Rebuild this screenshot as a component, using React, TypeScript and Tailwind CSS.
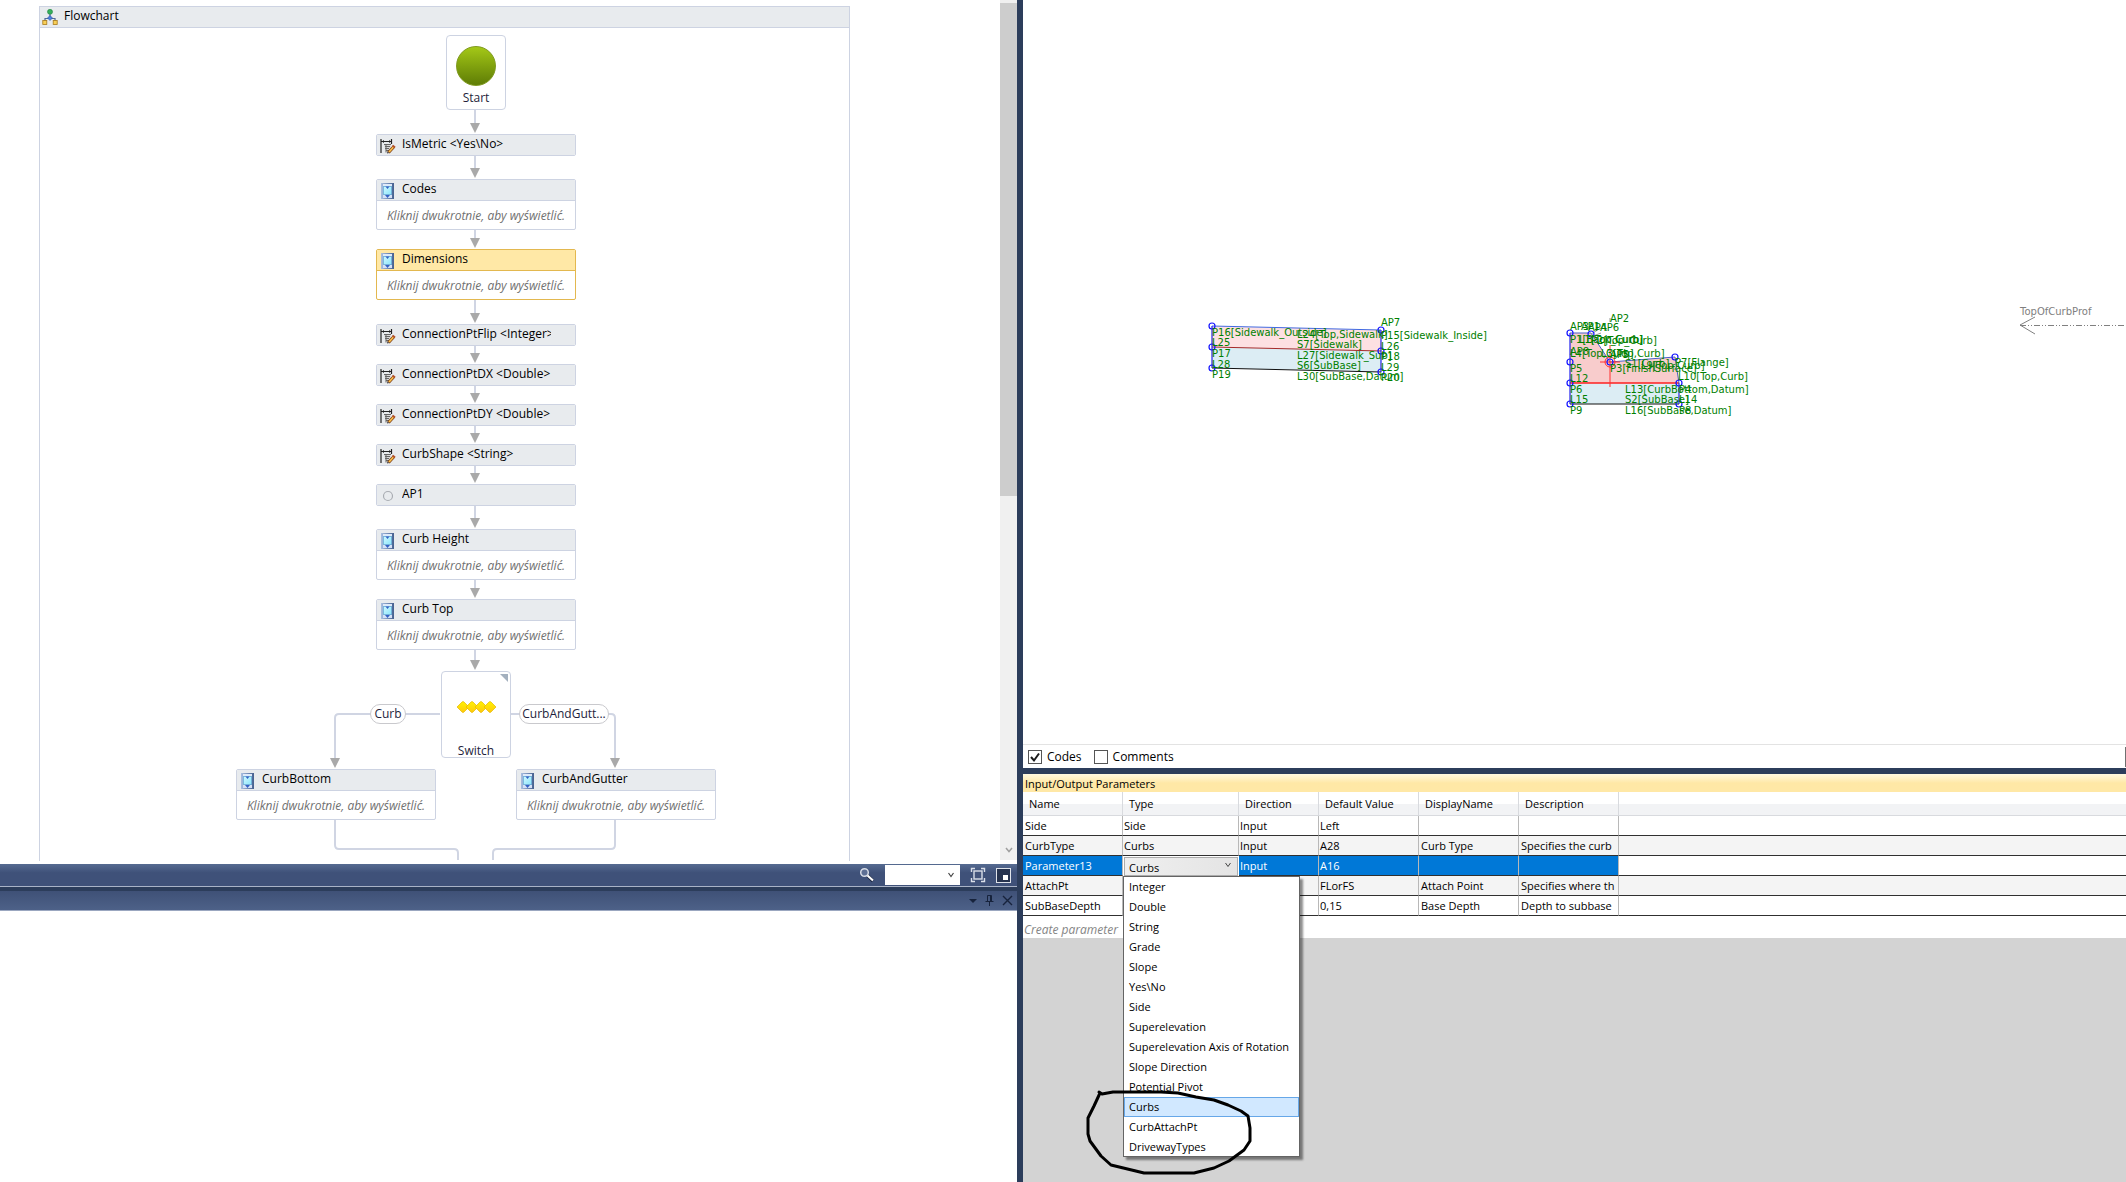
import React from "react";

type StepKind = "variable" | "sequence" | "point";

interface Step {
  label: string;
  kind: StepKind;
  x: number;
  y: number;
  selected?: boolean;
}

const steps: Step[] = [
  { label: "IsMetric <Yes\\No>", kind: "variable", x: 376, y: 134 },
  { label: "Codes", kind: "sequence", x: 376, y: 179 },
  { label: "Dimensions", kind: "sequence", x: 376, y: 249, selected: true },
  { label: "ConnectionPtFlip <Integer>", kind: "variable", x: 376, y: 324 },
  { label: "ConnectionPtDX <Double>", kind: "variable", x: 376, y: 364 },
  { label: "ConnectionPtDY <Double>", kind: "variable", x: 376, y: 404 },
  { label: "CurbShape <String>", kind: "variable", x: 376, y: 444 },
  { label: "AP1", kind: "point", x: 376, y: 484 },
  { label: "Curb Height", kind: "sequence", x: 376, y: 529 },
  { label: "Curb Top", kind: "sequence", x: 376, y: 599 },
  { label: "CurbBottom", kind: "sequence", x: 236, y: 769 },
  { label: "CurbAndGutter", kind: "sequence", x: 516, y: 769 },
];

const verticalLinks: [number, number][] = [
  [109, 134],
  [156, 179],
  [230, 249],
  [300, 324],
  [346, 364],
  [386, 404],
  [426, 444],
  [466, 484],
  [506, 529],
  [580, 599],
  [650, 671],
];

const typeOptions = [
  "Integer",
  "Double",
  "String",
  "Grade",
  "Slope",
  "Yes\\No",
  "Side",
  "Superelevation",
  "Superelevation Axis of Rotation",
  "Slope Direction",
  "Potential Pivot",
  "Curbs",
  "CurbAttachPt",
  "DrivewayTypes",
];

const parameters = [
  { name: "Side", type: "Side", direction: "Input", value: "Left", display: "", description: "" },
  { name: "CurbType", type: "Curbs", direction: "Input", value: "A28", display: "Curb Type", description: "Specifies the curb" },
  { name: "Parameter13", type: "Curbs", direction: "Input", value: "A16", display: "", description: "", selected: true },
  { name: "AttachPt", type: "", direction: "", value: "FLorFS", display: "Attach Point", description: "Specifies where th" },
  { name: "SubBaseDepth", type: "", direction: "", value: "0,15", display: "Base Depth", description: "Depth to subbase" },
];

function VariableIcon() {
  return (
    <svg className="h-4 w-4" viewBox="0 0 16 16" fill="none">
      <path d="M1 1v14M11.500 1v5M1 3.500h11" stroke="#222" strokeWidth="1.200" />
      <path d="M2 3.500l2-1.500v3zM11 3.500l-2-1.500v3z" fill="#222" />
      <path d="M4 6.500h7l-1 7H6z" fill="#d9d9d9" />
      <path d="M4 6.500h7M5 8.500h5M5 10.500h4M6 12.500h3M6 6.500v8" stroke="#666" />
      <path d="M8.500 14.500L14 8.500" stroke="#7a3b12" strokeWidth="3.200" />
      <path d="M9 14L13.500 9" stroke="#fbc04a" strokeWidth="1.800" />
      <path d="M12.500 7.500l2.500 2" stroke="#b4532a" strokeWidth="2" />
      <path d="M7 15.500l.5-2 1.500 1.500z" fill="#333" />
    </svg>
  );
}

function SequenceIcon() {
  return (
    <svg className="h-4 w-4" viewBox="0 0 16 16">
      <defs>
        <linearGradient id="seq-frame" x1="0" x2="1">
          <stop offset="0" stopColor="#a9c0e2" />
          <stop offset="1" stopColor="#46608f" />
        </linearGradient>
        <linearGradient id="seq-fill" x1="0" x2="1" y2="1">
          <stop offset="0" stopColor="#d2f8ff" />
          <stop offset="1" stopColor="#8ce6fa" />
        </linearGradient>
      </defs>
      <rect x="1" y="0" width="13" height="16" fill="url(#seq-frame)" />
      <rect x="3" y="1" width="9" height="2" fill="#dfeafa" />
      <rect x="3" y="12" width="9" height="3" fill="#d3e0f6" />
      <rect x="3.500" y="3.500" width="8" height="8" fill="url(#seq-fill)" stroke="#6fb4dc" strokeWidth=".8" />
      <path d="M5.500 3.500h4l-2 2.500zM5 12h5l-2.500 3z" fill="#3461c4" />
    </svg>
  );
}

function PointIcon() {
  return (
    <svg className="h-4 w-4" viewBox="0 0 16 16">
      <circle cx="8" cy="8" r="4.500" fill="none" stroke="#a9adb3" strokeWidth="1.200" />
    </svg>
  );
}

function FlowchartIcon() {
  return (
    <svg className="h-4 w-4" viewBox="0 0 16 16" fill="none">
      <path d="M8 5v4M3 12V9.500h10V12" stroke="#536b96" strokeWidth="1.200" />
      <circle cx="8" cy="2.800" r="2.500" fill="#35b15c" stroke="#21803e" strokeWidth=".6" />
      <path d="M8 6.500l2.500 2.500L8 11.500 5.500 9z" fill="#4a7fe0" stroke="#2b529f" strokeWidth=".6" />
      <rect x=".8" y="11.500" width="4" height="4" fill="#f8cf57" stroke="#a87a1c" strokeWidth=".8" />
      <rect x="11.200" y="11.500" width="4" height="4" fill="#f8cf57" stroke="#a87a1c" strokeWidth=".8" />
    </svg>
  );
}

function StepNode({ step }: { step: Step }) {
  const border = step.selected ? "border-[#e3b84f]" : "border-[#cdd3e2]";
  const head = step.selected ? "bg-[#ffe8a6]" : "bg-[#e8ebee]";
  return (
    <section
      className={`absolute w-50 overflow-hidden rounded-xs border bg-white ${border}`}
      style={{ left: step.x, top: step.y }}
    >
      <header className={`flex h-5 items-start gap-[6px] pl-[3px] ${head}`}>
        <span className="mt-[3px] shrink-0">
          {step.kind === "variable" && <VariableIcon />}
          {step.kind === "sequence" && <SequenceIcon />}
          {step.kind === "point" && <PointIcon />}
        </span>
        <h3 className="mt-px w-[149px] overflow-hidden whitespace-nowrap leading-4">{step.label}</h3>
      </header>
      {step.kind === "sequence" && (
        <p className={`flex h-[29px] items-center justify-center whitespace-nowrap border-t pt-[2px] italic text-[#707070] ${border}`}>
          Kliknij dwukrotnie, aby wyświetlić.
        </p>
      )}
    </section>
  );
}

function Connectors() {
  return (
    <svg className="absolute left-0 top-0 h-[860px] w-[850px]" fill="none">
      <g stroke="#d0d5e3" strokeWidth="2">
        {verticalLinks.map(([from, to]) => (
          <path key={from} d={`M475 ${from}V${to - 4}`} />
        ))}
        <path d="M440 714H339q-4 0-4 4v46M511 714h100q4 0 4 4v46" />
        <path d="M335 820v25q0 4 4 4h115q4 0 4 4v8M615 820v25q0 4-4 4H497q-4 0-4 4v8" />
      </g>
      <g fill="#a9a9a9">
        {verticalLinks.map(([from, to]) => (
          <path key={from} d={`M470 ${to - 11}h10l-5 10z`} />
        ))}
        <path d="M330 758h10l-5 10zM610 758h10l-5 10z" />
      </g>
    </svg>
  );
}

function Flowchart() {
  return (
    <div className="relative flex h-[864px] overflow-hidden bg-white pb-1">
      <div className="relative h-full w-[1000px] max-w-[calc(100%-17px)] shrink-0">
        <div className="ml-[39px] mr-[150px] mt-[6px] h-[855px] border border-b-0 border-[#cdd3e2]">
          <header className="flex h-[21px] items-center gap-[6px] border-b border-[#cdd3e2] bg-[#e8ebee] pl-[2px]">
            <FlowchartIcon />
            <h2 className="pb-[2px] leading-4">Flowchart</h2>
          </header>
        </div>
        <Connectors />
        <div className="absolute left-[446px] top-[35px] flex h-[75px] w-15 flex-col items-center justify-between rounded border border-[#cdd3e2] bg-white pb-[3px] pt-[10px]">
          <div className="h-10 w-10 rounded-full border border-[#7f9a1f] bg-linear-to-b from-[#a4c817] to-[#5f7d06]" />
          <span className="leading-4 text-[#1e1e3c]">Start</span>
        </div>
        {steps.map((step) => (
          <StepNode key={step.label} step={step} />
        ))}
        <div className="absolute left-[441px] top-[671px] flex h-[87px] w-[70px] flex-col items-center justify-between rounded border border-[#cdd3e2] bg-white pt-7">
          <svg className="h-4 w-10" viewBox="0 0 40 16">
            <defs>
              <linearGradient id="diamond" x2="0" y2="1">
                <stop offset="0" stopColor="#fff200" />
                <stop offset="1" stopColor="#ffc90e" />
              </linearGradient>
            </defs>
            {[7, 16, 25, 34].map((x) => (
              <path key={x} d={`M${x - 6} 7l5-5q1-1 2 0l5 5-5 5q-1 1-2 0z`} fill="url(#diamond)" stroke="#e6b800" strokeWidth=".7" />
            ))}
          </svg>
          <span className="leading-[12px] text-[#1e1e3c]">Switch</span>
          <svg className="absolute right-[2px] top-[2px] h-2 w-2" viewBox="0 0 8 8">
            <path d="M0 0h8v8z" fill="#a3b0be" />
          </svg>
        </div>
        <span className="absolute left-[370px] top-[704px] flex h-5 w-9 items-center justify-center rounded-full border border-[#c9c9cd] bg-white text-[#1e1e3c]">
          Curb
        </span>
        <span className="absolute left-[519px] top-[704px] flex h-5 w-[90px] items-center justify-center rounded-full border border-[#c9c9cd] bg-white text-[#1e1e3c]">
          CurbAndGutt...
        </span>
      </div>
      <div className="ml-auto flex w-[17px] shrink-0 flex-col bg-[#f0f0f0]">
        <div className="mt-[3px] h-[493px] bg-[#cdcdcd]" />
        <button aria-label="Scroll down" className="mt-auto flex h-5 items-center justify-center">
          <svg className="h-2 w-2" viewBox="0 0 8 8" fill="none" stroke="#a0a0a0" strokeWidth="1.500">
            <path d="M1 2l3 3.500L7 2" />
          </svg>
        </button>
      </div>
    </div>
  );
}

function ZoomBar() {
  return (
    <div className="flex h-[23px] items-center justify-end border-b border-[#a9b3c7] bg-linear-to-b from-[#566b91] to-[#3f5179] to-40% pr-[6px]">
      <button aria-label="Search" className="mr-[10px]">
        <svg className="h-4 w-4" viewBox="0 0 16 16" fill="none">
          <path d="M8.500 8.500L14 14" stroke="#1c2740" strokeWidth="3.500" />
          <path d="M8 8l6 5.500" stroke="#fff" strokeWidth="2.200" />
          <circle cx="5.500" cy="5.500" r="3.800" stroke="#d6dbe5" strokeWidth="1.500" fill="#5d6f94" />
        </svg>
      </button>
      <div className="relative mr-[10px] h-5 w-[75px]">
        <select aria-label="Zoom" className="h-5 w-full appearance-none bg-white text-black outline-none">
          <option></option>
        </select>
        <svg className="pointer-events-none absolute right-[6px] top-[7px] h-[6px] w-[6px]" viewBox="0 0 6 6" fill="none" stroke="#444" strokeWidth="1.200">
          <path d="M.5 1L3 4.500 5.500 1" />
        </svg>
      </div>
      <button aria-label="Fit to screen" className="mr-[10px]">
        <svg className="h-4 w-4" viewBox="0 0 16 16" fill="none" stroke="#d9dee8" strokeWidth="1.400">
          <path d="M1.500 5V1.500H5M11 1.500h3.500V5M14.500 11v3.500H11M5 14.500H1.500V11" />
          <rect x="4" y="4" width="8" height="8" fill="#44557c" />
        </svg>
      </button>
      <button aria-label="Overview" className="border border-[#dfe3ea] bg-[#26334f]">
        <svg className="h-[13px] w-[13px]" viewBox="0 0 13 13">
          <rect x="6" y="6" width="5" height="5" fill="#fff" />
        </svg>
      </button>
    </div>
  );
}

function LowerPane() {
  return (
    <section className="flex grow flex-col">
      <header className="flex h-5 items-center justify-end gap-[7px] border-b border-[#9ba7c0] bg-linear-to-b from-[#3f5177] to-[#4d6188] pr-1">
        <button aria-label="Window position">
          <svg className="h-2 w-2" viewBox="0 0 8 8">
            <path d="M0 2h8L4 6z" fill="#17233c" />
          </svg>
        </button>
        <button aria-label="Auto hide">
          <svg className="h-[11px] w-[11px]" viewBox="0 0 11 11" fill="none" stroke="#17233c">
            <path d="M3.500 6.500v-6h4v6M6.500.5v6M1.500 6.500h8M5.500 6.500V11" />
          </svg>
        </button>
        <button aria-label="Close">
          <svg className="h-[11px] w-[11px]" viewBox="0 0 11 11" fill="none" stroke="#17233c" strokeWidth="1.400">
            <path d="M1 1l9 9M10 1l-9 9" />
          </svg>
        </button>
      </header>
      <div className="grow bg-white" />
    </section>
  );
}

const previewLabels: [number, number, string][] = [
  [1380, 326, "AP7"],
  [1211, 336, "P16[Sidewalk_Outside]"],
  [1296, 338, "L24[Top,Sidewalk]"],
  [1380, 339, "P15[Sidewalk_Inside]"],
  [1211, 346, "L25"],
  [1296, 348, "S7[Sidewalk]"],
  [1380, 350, "L26"],
  [1211, 357, "P17"],
  [1296, 359, "L27[Sidewalk_Sub]"],
  [1380, 360, "P18"],
  [1211, 368, "L28"],
  [1296, 369, "S6[SubBase]"],
  [1380, 371, "L29"],
  [1211, 378, "P19"],
  [1296, 380, "L30[SubBase,Datum]"],
  [1380, 381, "P20"],
  [1609, 322, "AP2"],
  [1569, 330, "AP3"],
  [1580, 330, "AP1"],
  [1587, 331, "AP4"],
  [1599, 331, "AP6"],
  [1569, 343, "P1[Back_Curb]"],
  [1578, 343, "L1[Top,Curb]"],
  [1590, 344, "P2[Top_Curb]"],
  [1569, 355, "AP8"],
  [1569, 357, "L4[Top,Curb]"],
  [1600, 357, "L3[Top,Curb]"],
  [1609, 358, "AP5"],
  [1569, 372, "P5"],
  [1609, 372, "P3[FinishSurface]"],
  [1624, 367, "S1[Curb]"],
  [1640, 369, "L9[Top,Curb]"],
  [1674, 366, "P7[Flange]"],
  [1677, 380, "L10[Top,Curb]"],
  [1569, 382, "L12"],
  [1569, 393, "P6"],
  [1624, 393, "L13[CurbBottom,Datum]"],
  [1678, 393, "P4"],
  [1569, 403, "L15"],
  [1624, 403, "S2[SubBase]"],
  [1678, 403, "L14"],
  [1569, 414, "P9"],
  [1624, 414, "L16[SubBase,Datum]"],
  [1678, 414, "P8"],
];

const previewPoints: [number, number][] = [
  [1211, 326], [1380, 330], [1211, 347], [1380, 351], [1211, 368], [1380, 372],
  [1569, 333], [1590, 334], [1569, 362], [1609, 362], [1674, 357],
  [1569, 383], [1678, 383], [1569, 404], [1678, 404],
];

function Preview() {
  return (
    <svg className="block h-[744px] w-full bg-white" role="img" aria-label="Subassembly preview">
      <svg x="-1022" overflow="visible" fill="none">
        <path d="M1211 326l169 4v21l-169-4z" fill="#fde0e2" />
        <path d="M1211 347l169 4v21l-169-4z" fill="#dcedf4" />
        <path d="M1569 333h21l19 29 65-5 4 26h-109z" fill="#f8cccc" />
        <path d="M1569 383h109v21h-109z" fill="#dcedf4" />
        <path d="M1211 326l169 4" stroke="#4169e1" />
        <path d="M1211 347l169 4" stroke="#a52a2a" />
        <path d="M1211 368l169 4M1569 404h109" stroke="#111" />
        <path d="M1569 383h109" stroke="#ff2020" strokeWidth="1.500" />
        <path d="M1211 326v42M1380 330v42M1569 333v71M1678 383v21" stroke="#2222ee" strokeWidth="1.200" />
        <path d="M1569 333h21l19 29 65-5 4 26" stroke="#4a60c8" />
        <path d="M1609 345v42M1599 362h20" stroke="#ff3030" />
        <path d="M1590 334l10-6M1592 336l8-3M1609 322v-4" stroke="#999" />
        <circle cx="1609" cy="362" r="5" stroke="#ff3030" />
        {previewPoints.map(([x, y]) => (
          <circle key={`${x}-${y}`} cx={x} cy={y} r="3" stroke="#1414ff" strokeWidth="1.200" />
        ))}
        <g className="fill-[#008000] font-['DejaVu_Sans',sans-serif] text-[10px]">
          {previewLabels.map(([x, y, text]) => (
            <text key={`${x}-${y}-${text}`} x={x} y={y}>{text}</text>
          ))}
        </g>
        <text x="2019" y="315" className="fill-[#808080] font-['DejaVu_Sans',sans-serif] text-[10px]">TopOfCurbProf</text>
        <path d="M2034 317l-15 8 15 9" stroke="#808080" />
      </svg>
      <line x1="997" y1="325.500" x2="100%" y2="325.500" stroke="#808080" strokeDasharray="6 2 1 2 1 2" />
    </svg>
  );
}

function CheckOption({ label, checked }: { label: string; checked?: boolean }) {
  return (
    <label className="flex items-center gap-[5px]">
      <span className="relative flex h-[14px] w-[14px]">
        <input type="checkbox" defaultChecked={checked} className="peer h-[14px] w-[14px] appearance-none border border-[#555] bg-white" />
        <svg className="pointer-events-none absolute inset-0 hidden h-[14px] w-[14px] peer-checked:block" viewBox="0 0 14 14" fill="none" stroke="#1a1a1a" strokeWidth="2">
          <path d="M3 7l3 3.500L11 3.500" />
        </svg>
      </span>
      {label}
    </label>
  );
}

function TypePicker() {
  return (
    <div className="relative h-5 bg-white p-px text-black">
      <select
        aria-label="Parameter type"
        defaultValue="Curbs"
        className="block h-[19px] w-full appearance-none border border-[#acacac] bg-linear-to-r from-[#efefef] to-[#e4e4e4] pl-[4px] pt-[2px] leading-4 outline-none"
      >
        {typeOptions.map((option) => (
          <option key={option}>{option}</option>
        ))}
      </select>
      <svg className="pointer-events-none absolute right-2 top-[6px] h-[6px] w-[6px]" viewBox="0 0 6 6" fill="none" stroke="#444">
        <path d="M.5 1L3 4.500 5.500 1" />
      </svg>
      <ul role="listbox" aria-label="Types" className="absolute left-0 top-5 z-10 w-[177px] border border-[#646464] bg-white shadow-[3px_3px_2px_#00000070]">
        {typeOptions.map((option) => (
          <li
            key={option}
            role="option"
            aria-selected={option === "Curbs"}
            className="h-5 whitespace-nowrap border border-transparent pl-1 leading-[18px] last:h-[19px] aria-selected:border-[#66a7e8] aria-selected:bg-[#d1e8ff]"
          >
            {option}
          </li>
        ))}
      </ul>
      <svg className="pointer-events-none absolute -left-[37px] top-[232px] z-20 h-[90px] w-[170px]" viewBox="0 0 170 90" fill="none">
        <path
          d="M12 4L15 6 26 4 51 4 74 4 91 5 109 9 127 12 141 17 154 23 161 28 163 40 163 53 157 62 142 73 127 80 107 85 57 85 24 77 14 68 3 53 1 46 1 30 7 18 13 5"
          stroke="#000"
          strokeWidth="3"
          strokeLinejoin="round"
          strokeLinecap="round"
          className="translate-x-px"
        />
      </svg>
    </div>
  );
}

function ParameterTable() {
  const cell = "h-5 overflow-hidden whitespace-nowrap border-b border-r border-b-[#303030] border-r-[#b8b8b8] p-0 leading-[18px]";
  return (
    <table className="w-full table-fixed border-separate border-spacing-0 text-left text-[11px]">
      <colgroup>
        <col className="w-[100px]" />
        <col className="w-[116px]" />
        <col className="w-20" />
        <col className="w-[100px]" />
        <col className="w-[100px]" />
        <col className="w-[100px]" />
        <col />
      </colgroup>
      <thead>
        <tr className="bg-linear-to-b from-white from-50% to-[#f2f3f5] to-50%">
          {["Name", "Type", "Direction", "Default Value", "DisplayName", "Description"].map((title) => (
            <th key={title} className="h-6 border-b border-r border-[#d8dade] p-0 pl-[6px] pt-[2px] font-normal">{title}</th>
          ))}
          <th className="border-b border-[#d8dade] p-0" aria-hidden="true" />
        </tr>
      </thead>
      <tbody>
        {parameters.map((p, i) => (
          <tr key={p.name} className={i % 2 ? "bg-[#f4f4f4]" : "bg-white"}>
            {[p.name, p.type, p.direction, p.value, p.display, p.description].map((text, col) =>
              p.selected && col === 1 ? (
                <td key={col} className="h-5 p-0 align-top">
                  <TypePicker />
                </td>
              ) : (
                <td
                  key={col}
                  className={`${cell} ${p.selected ? "bg-[#0078d7] text-white" : ""} ${col > 0 && col < 4 ? "pl-px" : "pl-[2px]"}`}
                >
                  {text}
                </td>
              ),
            )}
            <td className="border-b border-[#303030] p-0" />
          </tr>
        ))}
      </tbody>
    </table>
  );
}

export default function App() {
  return (
    <main className="grid min-h-screen grid-cols-[1017fr_1109fr] overflow-hidden bg-[#2c3d5b] font-['Open_Sans','Noto_Sans',sans-serif] text-[12px] text-black">
      <div className="flex min-w-0 flex-col">
        <Flowchart />
        <ZoomBar />
        <div className="h-1 bg-[#2c3d5b]" />
        <LowerPane />
      </div>
      <div className="flex min-w-0 flex-col pl-[6px]">
        <Preview />
        <div className="flex h-6 items-center gap-3 border-t border-[#e3e3e3] bg-white pl-[5px]">
          <CheckOption label="Codes" checked />
          <CheckOption label="Comments" />
          <div className="ml-auto h-5 w-px bg-[#707070]" />
        </div>
        <section className="mt-[6px] flex grow flex-col bg-[#d3d3d3]">
          <h2 className="h-[18px] bg-linear-to-b from-[#fff8e0] to-[#ffe8a6] to-50% pl-[2px] text-[11px] leading-5">Input/Output Parameters</h2>
          <div className="bg-white">
            <ParameterTable />
            <input
              aria-label="Create parameter"
              placeholder="Create parameter"
              className="block h-[22px] w-full bg-transparent pl-px pt-1 italic outline-none placeholder:text-[#858585]"
            />
          </div>
        </section>
      </div>
    </main>
  );
}
